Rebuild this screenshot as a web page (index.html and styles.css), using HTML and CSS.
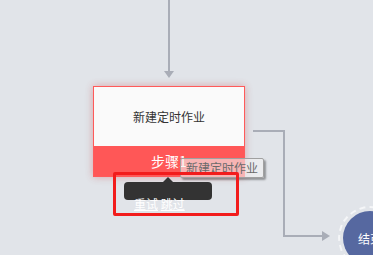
FILE: index.html
```html
<!DOCTYPE html>
<html lang="zh">
<head>
<meta charset="utf-8">
<link rel="stylesheet" href="styles.css">
</head>
<body>
<div class="canvas">
  <svg class="edges" width="373" height="255" viewBox="0 0 373 255">
    <line x1="169" y1="0" x2="169" y2="72" class="edge"/>
    <polygon points="164,71 174,71 169,78" class="head"/>
    <path d="M253 131 H284 V236 H323" class="edge"/>
    <polygon points="322,231 322,241 330,236" class="head"/>
  </svg>

  <div class="node">
    <div class="node-body">新建定时作业</div>
    <div class="node-foot">步骤1</div>
  </div>

  <div class="title-tip">新建定时作业</div>

  <div class="popover">
    <span class="popover-arrow"></span>
    <a class="pop-link">重试</a> <a class="pop-link">跳过</a>
  </div>

  <div class="highlight"></div>

  <div class="end-node"><span>结束</span></div>
</div>
</body>
</html>
```

FILE: styles.css
```css
html, body {
  margin: 0;
  padding: 0;
  background: #e1e4e9;
  font-family: "Noto Sans CJK SC", "Noto Sans", sans-serif;
}

.canvas {
  position: relative;
  width: 373px;
  height: 255px;
  overflow: hidden;
}

.edges {
  position: absolute;
  left: 0;
  top: 0;
}

.edge {
  fill: none;
  stroke: #a9adb7;
  stroke-width: 2;
}

.head {
  fill: #a9adb7;
}

.node {
  position: absolute;
  left: 93px;
  top: 86px;
  width: 150px;
  border: 1px solid #ff5a5a;
  box-shadow: 0 0 7px rgba(255, 90, 90, 0.35), 0 0 10px rgba(0, 0, 0, 0.08);
  display: flex;
  flex-direction: column;
}

.node-body {
  height: 59px;
  background: #fafafa;
  color: #333;
  font-size: 12px;
  display: flex;
  align-items: center;
  justify-content: center;
}

.node-foot {
  height: 30px;
  background: #ff5757;
  color: #fff;
  font-size: 14px;
  display: flex;
  align-items: center;
  justify-content: center;
}

.title-tip {
  position: absolute;
  left: 180px;
  top: 158px;
  width: 82px;
  height: 18px;
  border: 1px solid #a0a0a0;
  border-radius: 2px;
  background: rgba(242, 242, 242, 0.6);
  box-shadow: 2px 2px 2px rgba(0, 0, 0, 0.35);
  color: #6a6a6a;
  font-size: 12px;
  line-height: 18px;
  text-align: center;
}

.popover {
  position: absolute;
  left: 124px;
  top: 182px;
  width: 88px;
  height: 18px;
  box-sizing: border-box;
  padding: 15px 0 0 10px;
  background: #333;
  border-radius: 4px;
  color: #fff;
  font-size: 12px;
  line-height: 14px;
  white-space: nowrap;
}

.popover-arrow {
  position: absolute;
  left: 39px;
  top: -5px;
  width: 0;
  height: 0;
  border-left: 5px solid transparent;
  border-right: 5px solid transparent;
  border-bottom: 5px solid #333;
}

.pop-link {
  color: #fff;
  text-decoration: underline;
}

.highlight {
  position: absolute;
  left: 113px;
  top: 172px;
  width: 120px;
  height: 38px;
  border: 3px solid #f21c1c;
  border-radius: 2px;
}

.end-node {
  position: absolute;
  left: 338px;
  top: 206px;
  width: 54px;
  height: 54px;
  padding: 3px;
  border: 2px dashed #f5f6f8;
  border-radius: 50%;
  background: #5668a0;
  background-clip: content-box;
  color: #fff;
  font-size: 12px;
  display: flex;
  align-items: center;
  justify-content: center;
}
```
